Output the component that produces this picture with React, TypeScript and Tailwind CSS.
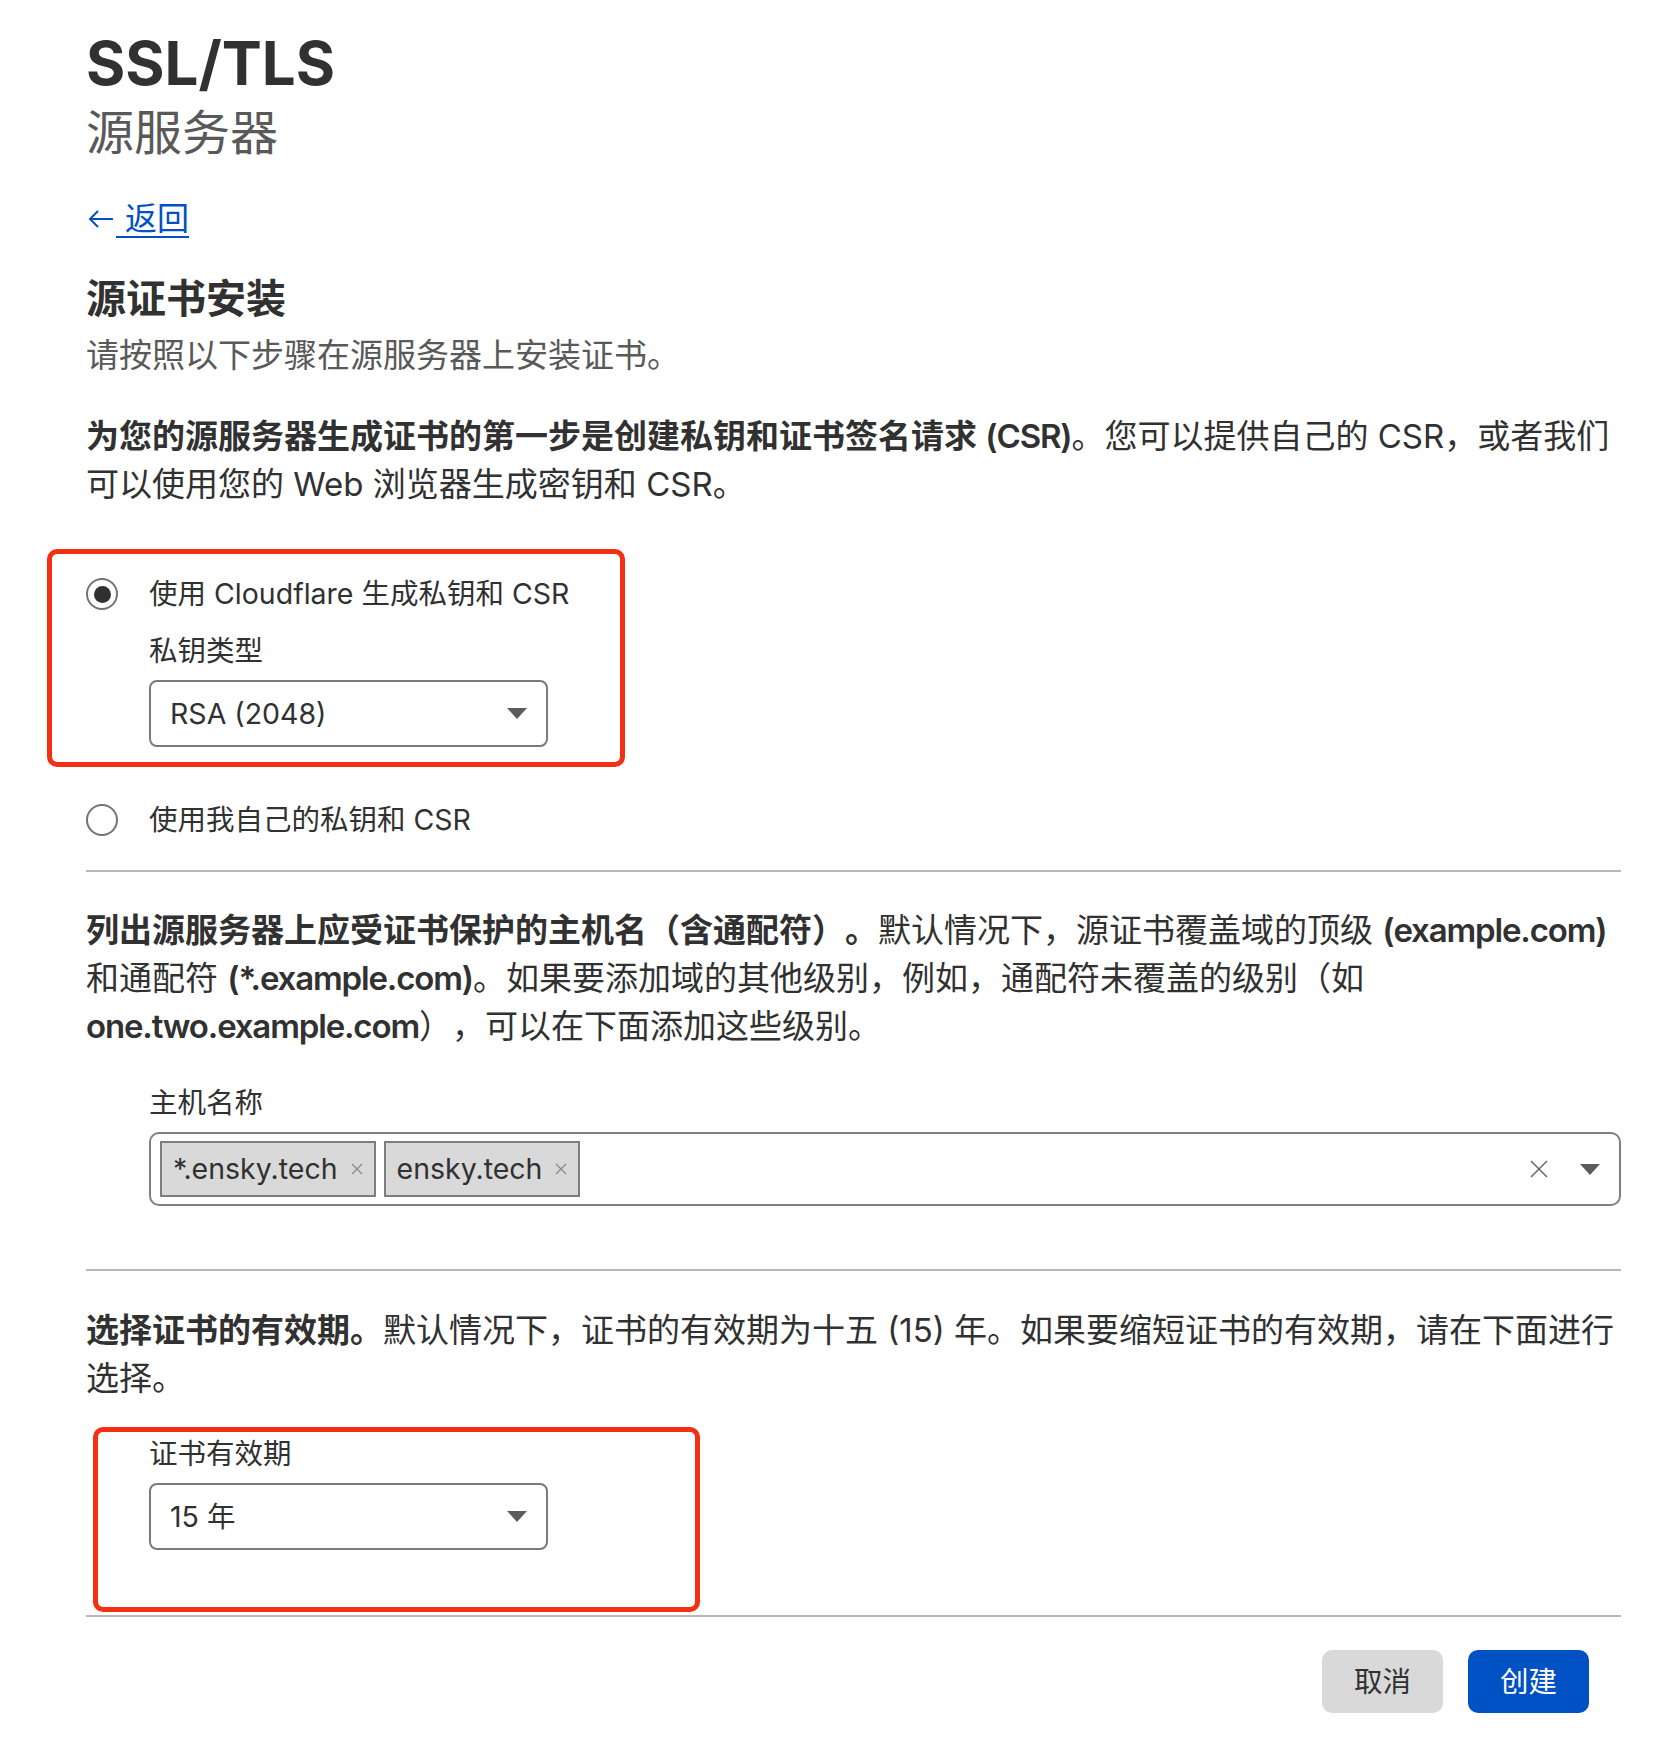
import React from 'react';

function Caret() {
  return (
    <svg width="20" height="11" viewBox="0 0 20 11" className="shrink-0">
      <polygon points="0,0 20,0 10,11" fill="#5c5c5c" />
    </svg>
  );
}

function Select({ value }: { value: string }) {
  return (
    <div className="mt-[5px] ml-[63px] w-[399px] h-[67px] border-2 border-[#7a7a7a] rounded-[8px] flex items-center justify-between pl-[19px] pr-[19px]">
      <span className="text-[28.5px] leading-[48px]">{value}</span>
      <Caret />
    </div>
  );
}

function Tag({ label }: { label: string }) {
  return (
    <div className="h-[56px] border-2 border-[#7d7d7d] bg-[#d9d9d9] flex items-center pl-[11px] pr-[11px]">
      <span className="text-[28.5px] leading-[48px] text-[#313131]">{label}</span>
      <svg width="12" height="12" viewBox="0 0 12 12" className="ml-[13px]">
        <path d="M1 1L11 11M11 1L1 11" stroke="#8c8c8c" strokeWidth="1.4" />
      </svg>
    </div>
  );
}

function B({ children }: { children: React.ReactNode }) {
  return <span className="font-semibold tracking-[-0.035em]">{children}</span>;
}

function Divider({ className }: { className: string }) {
  return <div className={`h-[2px] bg-[#b8b8b8] ${className}`} />;
}

export default function App() {
  return (
    <div className="relative min-h-[1756px] bg-white text-[#313131] font-['Inter','Noto_Sans_CJK_SC',sans-serif] [text-spacing-trim:space-all]">
      <div className="w-[1535px] ml-[86px] pt-[25px]">
        <h1 className="text-[60px] leading-[1.28] font-bold">SSL/TLS</h1>
        <h2 className="mt-[2px] text-[48px] leading-[1.2] text-[#595959]">源服务器</h2>

        <a href="#" className="mt-[34px] inline-flex items-center text-[32px] leading-[48px] text-[#0051c3]">
          <svg width="26" height="20" viewBox="0 0 26 20" className="ml-[2px]">
            <path d="M25 10H2M10 2L2 10L10 18" stroke="#0051c3" strokeWidth="2" fill="none" />
          </svg>
          <span className="ml-[2px] underline decoration-2 underline-offset-[6px]">{'\u00a0'}返回</span>
        </a>

        <h3 className="mt-[32px] text-[40px] leading-[48px] font-bold">源证书安装</h3>
        <p className="mt-[8px] text-[33px] leading-[48px] text-[#595959]">请按照以下步骤在源服务器上安装证书。</p>

        <p className="mt-[33px] text-[33px] leading-[48px]">
          <span className="font-semibold">为您的源服务器生成证书的第一步是创建私钥和证书签名请求 </span>
          <B>(CSR)</B>
          。您可以提供自己的 CSR，或者我们可以使用您的 Web 浏览器生成密钥和 CSR。
        </p>

        <div className="mt-[62px] flex items-center">
          <div className="w-[32px] h-[32px] rounded-full border-2 border-[#737373] flex items-center justify-center">
            <div className="w-[17px] h-[17px] rounded-full bg-[#313131]" />
          </div>
          <span className="ml-[31px] text-[28.5px] leading-[48px]">使用 Cloudflare 生成私钥和 CSR</span>
        </div>
        <div className="mt-[9px] ml-[63px] text-[28.5px] leading-[48px]">私钥类型</div>
        <Select value="RSA (2048)" />

        <div className="mt-[49px] flex items-center">
          <div className="w-[32px] h-[32px] rounded-full border-2 border-[#737373]" />
          <span className="ml-[31px] text-[28.5px] leading-[48px]">使用我自己的私钥和 CSR</span>
        </div>

        <Divider className="mt-[26px]" />

        <p className="mt-[34px] text-[33px] leading-[48px]">
          <span className="font-semibold">列出源服务器上应受证书保护的主机名（含通配符）。</span>
          默认情况下，源证书覆盖域的顶级 <B>(example.com)</B> 和通配符 <B>(*.example.com)</B>
          。如果要添加域的其他级别，例如，通配符未覆盖的级别（如 <B>one.two.example.com</B>
          ），可以在下面添加这些级别。
        </p>

        <div className="mt-[29px] ml-[63px] text-[28.5px] leading-[48px]">主机名称</div>
        <div className="mt-[5px] ml-[63px] h-[74px] border-2 border-[#808080] rounded-[10px] flex items-center pl-[9px] pr-[19px]">
          <div className="flex items-center gap-[8px]">
            <Tag label="*.ensky.tech" />
            <Tag label="ensky.tech" />
          </div>
          <div className="ml-auto flex items-center gap-[32px]">
            <svg width="18" height="18" viewBox="0 0 18 18">
              <path d="M1 1L17 17M17 1L1 17" stroke="#6b6b6b" strokeWidth="1.6" />
            </svg>
            <Caret />
          </div>
        </div>

        <Divider className="mt-[63px]" />

        <p className="mt-[35px] text-[33px] leading-[48px]">
          <span className="font-semibold">选择证书的有效期。</span>
          默认情况下，证书的有效期为十五 (15) 年。如果要缩短证书的有效期，请在下面进行选择。
        </p>

        <div className="mt-[28px] ml-[63px] text-[28.5px] leading-[48px]">证书有效期</div>
        <Select value="15 年" />

        <Divider className="mt-[65px]" />

        <div className="mt-[33px] flex justify-end gap-[25px] pr-[32px]">
          <button className="w-[121px] h-[63px] rounded-[10px] bg-[#d9d9d9] text-[28.5px] text-[#313131]">取消</button>
          <button className="w-[121px] h-[63px] rounded-[10px] bg-[#0051c3] text-[28.5px] text-white">创建</button>
        </div>
      </div>

      <div className="absolute left-[47px] top-[549px] w-[578px] h-[218px] border-[5px] border-[#f42f14] rounded-[10px]" />
      <div className="absolute left-[93px] top-[1427px] w-[607px] h-[185px] border-[5px] border-[#f42f14] rounded-[10px]" />
    </div>
  );
}
